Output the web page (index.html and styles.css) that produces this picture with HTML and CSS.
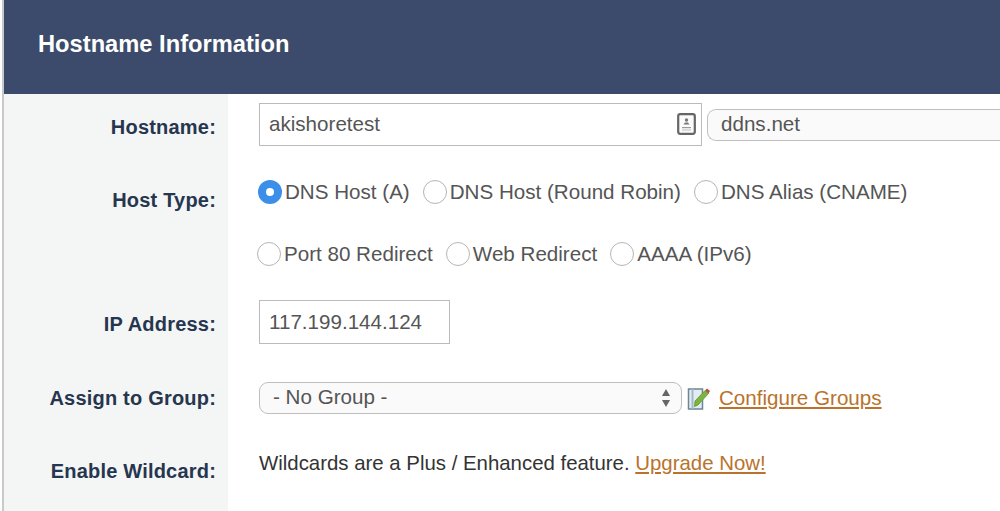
FILE: index.html
```html
<!DOCTYPE html>
<html lang="en">

<head>
    <meta charset="UTF-8">
    <title>Hostname Information</title>
    <link rel="stylesheet" href="styles.css">
</head>

<body>
    <div class="panel">
        <div class="panel-head">Hostname Information</div>

        <div class="row row-host">
            <div class="label">Hostname:</div>
            <div class="field host-field">
                <div class="text-input host-input">
                    <span>akishoretest</span>
                    <svg class="contact-icon" viewBox="0 0 19 22">
                        <rect x="1.2" y="1.2" width="16.600" height="19.600" rx="2" fill="#fbfbfb" stroke="#666" stroke-width="2.200"></rect>
                        <circle cx="9.500" cy="7" r="1.700" fill="#777"></circle>
                        <path d="M6.500 11.500 8 9.500h3l1.500 2z" fill="#777"></path>
                        <path d="M5 14h9v1.200H5z" fill="#999"></path>
                        <path d="M5 16.500h9v1H5z" fill="#bbb"></path>
                    </svg>
                </div>
                <div class="select-box domain-select">ddns.net</div>
            </div>
        </div>

        <div class="row row-type">
            <div class="label">Host Type:</div>
            <div class="field radio-lines">
                <div class="radio-line">
                    <span class="radio checked"></span><span class="radio-text">DNS Host (A)</span>
                    <span class="radio"></span><span class="radio-text">DNS Host (Round Robin)</span>
                    <span class="radio"></span><span class="radio-text">DNS Alias (CNAME)</span>
                </div>
                <div class="radio-line">
                    <span class="radio"></span><span class="radio-text">Port 80 Redirect</span>
                    <span class="radio"></span><span class="radio-text">Web Redirect</span>
                    <span class="radio"></span><span class="radio-text">AAAA (IPv6)</span>
                </div>
            </div>
        </div>

        <div class="row row-ip">
            <div class="label">IP Address:</div>
            <div class="field">
                <div class="text-input ip-input">117.199.144.124</div>
            </div>
        </div>

        <div class="row row-group">
            <div class="label">Assign to Group:</div>
            <div class="field group-field">
                <div class="select-box group-select">
                    <span>- No Group -</span>
                    <svg class="select-arrows" viewBox="0 0 10 20">
                        <path d="M5 1 9 8H1z" fill="#666"></path>
                        <path d="M5 19 1 12h8z" fill="#666"></path>
                    </svg>
                </div>
                <svg class="edit-icon" viewBox="0 0 24 25">
                    <rect x="1.500" y="3" width="14" height="20" fill="#e3ecf2" stroke="#6d8594" stroke-width="1.500"></rect>
                    <path d="M5.500 3v20" stroke="#a3b8c6" stroke-width="2"></path>
                    <path d="M8 15 18 4.500l3.500 3L11 19l-3.500 1.500z" fill="#7cb342" stroke="#5a9a2a" stroke-width="0.800"></path>
                    <path d="M18 4.500 20 2.500l3 2.500-1.500 2.500z" fill="#b5533c"></path>
                </svg>
                <a class="link" href="#">Configure Groups</a>
            </div>
        </div>

        <div class="row row-wild">
            <div class="label">Enable Wildcard:</div>
            <div class="field wild-text">Wildcards are a Plus / Enhanced feature. <a class="link" href="#">Upgrade Now!</a></div>
        </div>
    </div>
</body>

</html>
```

FILE: styles.css
```css
html,
body {
    margin: 0;
    height: 100%;
    overflow: hidden;
    background: #fff;
}

body {
    font-family: "Liberation Sans", Arial, sans-serif;
    color: #444;
}

.panel {
    width: 996px;
    height: 511px;
    margin-left: 2px;
    border-left: 2px solid #c9c9c9;
    overflow: hidden;
    background: linear-gradient(to right, #f4f5f5 224px, #fff 224px);
}

.panel-head {
    height: 94px;
    padding-left: 34px;
    box-sizing: border-box;
    background: #3c4b6b;
    color: #fff;
    font-size: 23.700px;
    font-weight: bold;
    line-height: 88px;
}

.row {
    display: grid;
    grid-template-columns: 212px 1fr;
    column-gap: 43px;
}

.label {
    text-align: right;
    font-size: 20px;
    font-weight: bold;
    color: #26364f;
    letter-spacing: 0.2px;
    line-height: 22px;
}

.row-host {
    height: 69px;
    padding-top: 9px;
    box-sizing: border-box;
}

.row-host .label {
    padding-top: 13px;
}

.host-field {
    display: flex;
    align-items: center;
    height: 43px;
    gap: 5px;
}

.text-input {
    box-sizing: border-box;
    border: 1.500px solid #bbb;
    background: #fff;
    font-size: 20.600px;
    color: #555;
}

.host-input {
    width: 443px;
    flex: none;
    height: 43px;
    padding: 0 4px 2px 9px;
    display: flex;
    align-items: center;
    justify-content: space-between;
}

.contact-icon {
    width: 19px;
    height: 22px;
    margin-right: 1px;
}

.select-box {
    box-sizing: border-box;
    border: 1.500px solid #bfbfbf;
    border-radius: 9px;
    background: #fafafa;
    font-size: 20.600px;
    color: #555;
    display: flex;
    align-items: center;
    padding-bottom: 2px;
}

.domain-select {
    flex: 1;
    height: 32px;
    padding-left: 13px;
    border-right: none;
    border-radius: 9px 0 0 9px;
}

.row-type {
    height: 133px;
}

.row-type .label {
    padding-top: 26px;
}

.radio-lines {
    padding-top: 17px;
}

.radio-line {
    display: flex;
    align-items: center;
    height: 24px;
    margin-bottom: 38px;
    font-size: 20.600px;
    color: #555;
}

.radio {
    box-sizing: border-box;
    width: 24px;
    height: 24px;
    flex: none;
    border: 1.500px solid #b5b5b5;
    border-radius: 50%;
    background: #fff;
    margin-left: -2px;
}

.radio.checked {
    border: 8px solid #3b8fe8;
    margin-left: -1px;
}

.radio-text {
    margin-left: 3px;
    margin-right: 15px;
}

.row-ip {
    height: 79px;
}

.row-ip .label {
    padding-top: 17px;
}

.ip-input {
    width: 191px;
    height: 44px;
    margin-top: 4px;
    padding-left: 9px;
    line-height: 41px;
}

.row-group {
    height: 72px;
}

.row-group .label {
    padding-top: 12px;
}

.group-field {
    display: flex;
    align-items: center;
    align-self: start;
    height: 32px;
    margin-top: 7px;
}

.group-select {
    width: 423px;
    height: 32px;
    padding: 0 10px 2px 13px;
    justify-content: space-between;
}

.select-arrows {
    width: 10px;
    height: 20px;
    margin-top: 2px;
}

.edit-icon {
    width: 24px;
    height: 25px;
    margin-left: 5px;
    margin-right: 8px;
}

.link {
    color: #b9732c;
    font-size: 20.600px;
    text-decoration: underline;
}

.row-wild .label {
    padding-top: 13px;
}

.wild-text {
    font-size: 20.400px;
    color: #333;
    padding-top: 5px;
    line-height: 22px;
}

.wild-text .link {
    font-size: 20.400px;
}
```
